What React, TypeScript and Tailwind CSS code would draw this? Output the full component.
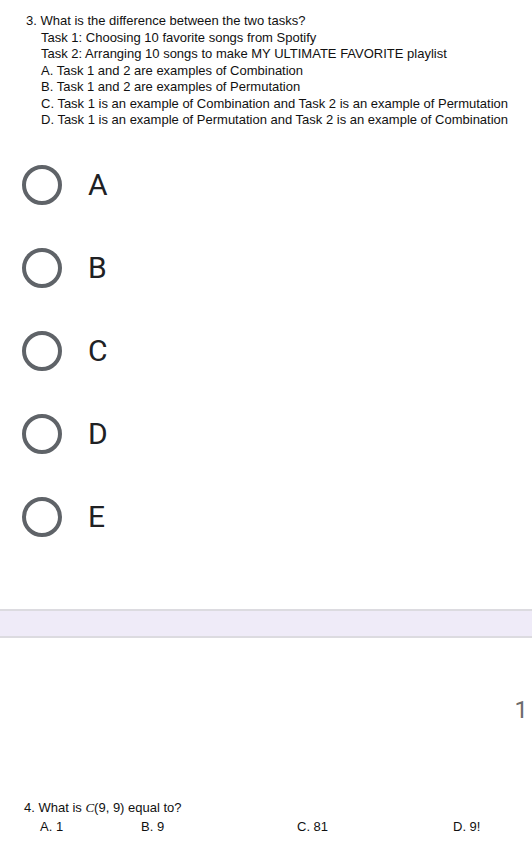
import React from 'react';

const taskLines = [
  'Task 1: Choosing 10 favorite songs from Spotify',
  'Task 2: Arranging 10 songs to make MY ULTIMATE FAVORITE playlist',
  'A. Task 1 and 2 are examples of Combination',
  'B. Task 1 and 2 are examples of Permutation',
  'C. Task 1 is an example of Combination and Task 2 is an example of Permutation',
  'D. Task 1 is an example of Permutation and Task 2 is an example of Combination',
];

const choices = ['A', 'B', 'C', 'D', 'E'];

function Radio({ label }: { label: string }) {
  return (
    <label className="flex items-center h-[83px] pl-[22px] cursor-pointer">
      <span className="w-[40px] h-[40px] rounded-full border-[4px] border-[#5f6368] shrink-0" />
      <span className="ml-[26px] text-[30px] text-[#202124] font-['Roboto',sans-serif] leading-none">
        {label}
      </span>
    </label>
  );
}

export default function App() {
  return (
    <div className="w-[532px] h-[868px] bg-white overflow-hidden font-['Liberation_Sans',Arial,sans-serif] text-[13px] text-[#111]">
      {/* question 3 image text */}
      <div className="pt-[13px] pl-[26px] leading-[16.5px]">
        <div>3. What is the difference between the two tasks?</div>
        <div className="pl-[15px]">
          {taskLines.map((line) => (
            <div key={line}>{line}</div>
          ))}
        </div>
      </div>

      <div className="mt-[15px]">
        {choices.map((c) => (
          <Radio key={c} label={c} />
        ))}
      </div>

      {/* page divider band */}
      <div className="mt-[50px] h-[29px] bg-[#efebf8] border-y-[2px] border-[#dcdbe0]" />

      <div className="flex justify-end pr-[4px] pt-[60px] h-[100px]">
        <span className="text-[24px] text-[#6b6b6b] font-['Roboto',sans-serif] leading-none">1</span>
      </div>

      {/* question 4 */}
      <div className="mt-[60px] pl-[24px] leading-[19px]">
        <div>
          4. What is <span className="font-['Liberation_Serif',serif] italic">C</span>(9, 9) equal to?
        </div>
        <div className="flex pl-[16px]">
          <span className="w-[101px]">A. 1</span>
          <span className="w-[156px]">B. 9</span>
          <span className="w-[156px]">C. 81</span>
          <span>D. 9!</span>
        </div>
      </div>
    </div>
  );
}
